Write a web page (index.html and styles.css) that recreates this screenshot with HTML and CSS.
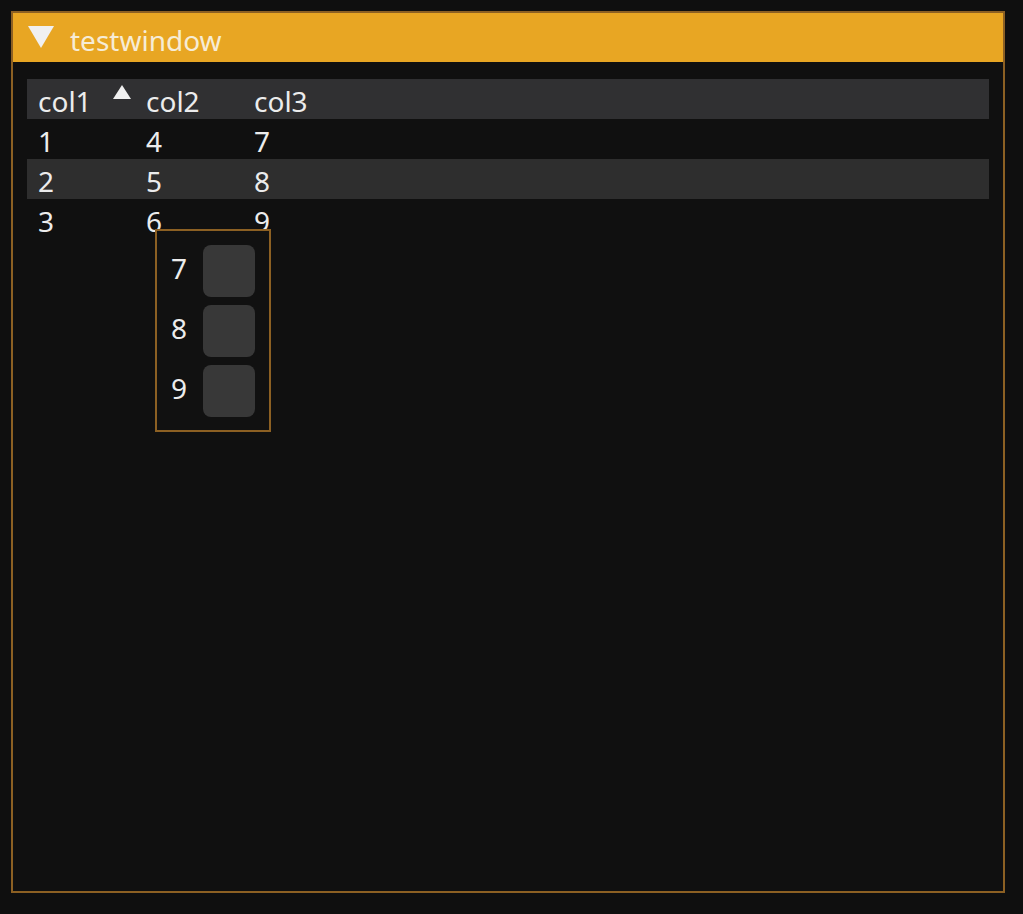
FILE: index.html
```html
<!DOCTYPE html>
<html lang="en">
<head>
    <meta charset="UTF-8">
    <title>testwindow</title>
    <link rel="stylesheet" href="styles.css">
</head>
<body>
    <div class="window">
        <div class="title-bar">
            <svg class="collapse-icon" width="26" height="22" viewBox="0 0 26 22">
                <polygon points="0,0 26,0 13,22" fill="#f0f0f0"/>
            </svg>
            <span class="title">testwindow</span>
        </div>

        <div class="content">
            <div class="table">
                <div class="row header">
                    <div class="cell sorted">
                        <span>col1</span>
                        <svg class="sort-icon" width="18" height="14" viewBox="0 0 18 14">
                            <polygon points="9,0 18,14 0,14" fill="#f0f0f0"/>
                        </svg>
                    </div>
                    <div class="cell">col2</div>
                    <div class="cell">col3</div>
                </div>
                <div class="row">
                    <div class="cell">1</div>
                    <div class="cell">4</div>
                    <div class="cell">7</div>
                </div>
                <div class="row striped">
                    <div class="cell">2</div>
                    <div class="cell">5</div>
                    <div class="cell">8</div>
                </div>
                <div class="row">
                    <div class="cell">3</div>
                    <div class="cell">6</div>
                    <div class="cell">9</div>
                </div>
            </div>
        </div>

        <div class="popup">
            <div class="popup-item">
                <span class="popup-label">7</span>
                <span class="checkbox"></span>
            </div>
            <div class="popup-item">
                <span class="popup-label">8</span>
                <span class="checkbox"></span>
            </div>
            <div class="popup-item">
                <span class="popup-label">9</span>
                <span class="checkbox"></span>
            </div>
        </div>
    </div>
</body>
</html>
```

FILE: styles.css
```css
html, body {
    margin: 0;
    padding: 0;
    background-color: #0f0f0f;
}
body {
    padding: 11px;
    font-family: 'Noto Sans', 'Open Sans', sans-serif;
    font-size: 28px;
    color: #ececec;
}
.window {
    position: relative;
    width: 990px;
    height: 878px;
    border: 2px solid #8c6023;
    background-color: #101010;
    display: flex;
    flex-direction: column;
}
.title-bar {
    height: 49px;
    background-color: #e8a623;
    display: flex;
    align-items: center;
    padding-left: 15px;
}
.collapse-icon {
    margin-top: -2px;
}
.title {
    margin-left: 16px;
    color: #f6ecd6;
    line-height: 49px;
    position: relative;
    top: 3px;
}
.content {
    padding: 17px 14px 0 14px;
}
.row {
    display: flex;
    height: 40px;
    line-height: 44px;
}
.header {
    background-color: #303032;
}
.striped {
    background-color: #2e2e2e;
}
.cell {
    width: 97px;
    padding-left: 11px;
}
.sorted {
    display: flex;
    justify-content: space-between;
    padding-right: 4px;
    width: 93px;
}
.sort-icon {
    margin-top: 6px;
}
.popup {
    position: absolute;
    left: 142px;
    top: 216px;
    width: 112px;
    border: 2px solid #8c6023;
    background-color: #111111;
    padding: 14px 0 13px 0;
    display: flex;
    flex-direction: column;
    gap: 8px;
}
.popup-item {
    display: flex;
    align-items: center;
    height: 52px;
    padding-left: 14px;
}
.popup-label {
    width: 32px;
    position: relative;
    top: -3px;
}
.checkbox {
    width: 52px;
    height: 52px;
    border-radius: 8px;
    background-color: #383838;
}
```
